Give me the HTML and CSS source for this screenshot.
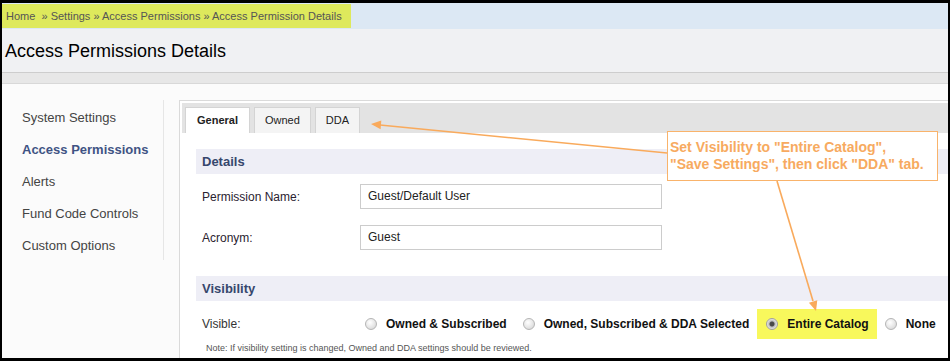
FILE: index.html
```html
<!DOCTYPE html>
<html>
<head>
<meta charset="utf-8">
<link rel="stylesheet" href="styles.css">
</head>
<body>
<div class="frame">
  <div class="crumbbar">
    <span class="crumb">Home &nbsp;» Settings » Access Permissions » Access Permission Details</span>
  </div>
  <div class="titlebar">Access Permissions Details</div>
  <div class="band"></div>
  <div class="main">
    <ul class="sidebar">
      <li>System Settings</li>
      <li class="active">Access Permissions</li>
      <li>Alerts</li>
      <li>Fund Code Controls</li>
      <li>Custom Options</li>
    </ul>
    <div class="panel">
      <div class="tabs">
        <div class="tab active">General</div>
        <div class="tab">Owned</div>
        <div class="tab">DDA</div>
      </div>
      <div class="content">
        <div class="section">Details</div>
        <div class="row first">
          <label class="label">Permission Name:</label>
          <div class="input">Guest/Default User</div>
        </div>
        <div class="row second">
          <label class="label">Acronym:</label>
          <div class="input">Guest</div>
        </div>
        <div class="section vis">Visibility</div>
        <div class="radios">
          <span class="rlabel">Visible:</span>
          <span class="opt"><span class="radio"></span>Owned &amp; Subscribed</span>
          <span class="opt"><span class="radio"></span>Owned, Subscribed &amp; DDA Selected</span>
          <span class="opt hl"><span class="radio on"></span>Entire Catalog</span>
          <span class="opt"><span class="radio"></span>None</span>
        </div>
        <div class="note">Note: If visibility setting is changed, Owned and DDA settings should be reviewed.</div>
      </div>
    </div>
  </div>
</div>
<svg class="arrows" width="950" height="361" viewBox="0 0 950 361">
  <line x1="667" y1="153" x2="380" y2="125" stroke="#f9aa5c" stroke-width="1.6"/>
  <polygon points="371,124 381.3,120.6 380.6,129.2" fill="#f9aa5c"/>
  <line x1="777" y1="181" x2="813" y2="301" stroke="#f9aa5c" stroke-width="1.6"/>
  <polygon points="816,311 817.3,300.2 808.9,302.7" fill="#f9aa5c"/>
</svg>
<div class="callout">Set Visibility to "Entire Catalog",<br>"Save Settings", then click "DDA" tab.</div>
</body>
</html>
```
FILE: styles.css
```css
html, body {
  margin: 0;
  padding: 0;
}
body {
  position: relative;
  width: 950px;
  height: 361px;
  overflow: hidden;
  font-family: "Liberation Sans", Arial, sans-serif;
  background: #fff;
}
.frame {
  width: 950px;
  height: 361px;
  box-sizing: border-box;
  border-style: solid;
  border-color: #000;
  border-width: 3px 2px 3px 2px;
  overflow: hidden;
  background: #fbfbfb;
  display: flex;
  flex-direction: column;
}
.crumbbar {
  height: 26px;
  flex: none;
  background: #dce8f4;
}
.crumb {
  display: inline-block;
  margin-top: 1px;
  height: 24px;
  line-height: 24px;
  padding: 0 9px 0 4px;
  background: #dee95c;
  color: #555;
  font-size: 11px;
}
.titlebar {
  height: 42px;
  flex: none;
  line-height: 42px;
  padding-top: 1px;
  background: #f0f1f3;
  padding-left: 3px;
  font-size: 18px;
  color: #000;
}
.band {
  height: 10px;
  flex: none;
  background: #e7e7e7;
  border-top: 1px solid #cdcdcd;
  border-bottom: 1px solid #d8d8d8;
}
.main {
  flex: 1;
  display: flex;
  align-items: flex-start;
  background: #fbfbfb;
}
.sidebar {
  list-style: none;
  margin: 16px 0 0 0;
  padding: 2px 0 0 20px;
  width: 141px;
  height: 158px;
  flex: none;
  border-right: 1px solid #e6e6e6;
}
.sidebar li {
  height: 32px;
  line-height: 32px;
  font-size: 13px;
  color: #444;
}
.sidebar li.active {
  font-weight: bold;
  color: #3f5384;
}
.panel {
  flex: none;
  width: 800px;
  margin: 16px 0 0 15px;
  border: 1px solid #dadada;
  padding: 2px;
  background: #fff;
}
.tabs {
  display: flex;
  align-items: flex-end;
  gap: 4px;
  height: 30px;
  box-sizing: border-box;
  padding: 4px 0 0 3px;
  background: #e3e3e3;
}
.tab {
  height: 26px;
  box-sizing: border-box;
  line-height: 25px;
  padding: 0 10px;
  border: 1px solid #d4d4d4;
  border-bottom: none;
  background: #f4f4f4;
  font-size: 11px;
  color: #222;
}
.tab.active {
  background: #fff;
  font-weight: bold;
  padding: 0 11px;
}
.content {
  background: #fff;
  padding: 16px 0 10px 14px;
}
.section {
  height: 25px;
  line-height: 25px;
  background: #eeeef6;
  padding-left: 6px;
  font-size: 13px;
  font-weight: bold;
  color: #36476d;
}
.section.vis {
  margin-top: 26px;
}
.row {
  display: flex;
  align-items: center;
  height: 25px;
}
.row.first {
  margin-top: 10px;
}
.row.second {
  margin-top: 16px;
}
.label {
  width: 158px;
  padding-left: 6px;
  font-size: 12px;
  color: #2a2230;
}
.input {
  width: 302px;
  height: 25px;
  box-sizing: border-box;
  border: 1px solid #cccccc;
  line-height: 23px;
  padding-left: 7px;
  font-size: 12px;
  color: #222;
  background: #fff;
}
.radios {
  display: flex;
  align-items: center;
  height: 30px;
  margin-top: 8px;
}
.rlabel {
  width: 155px;
  padding-left: 6px;
  font-size: 12px;
  color: #333;
}
.opt {
  display: flex;
  align-items: center;
  gap: 9px;
  height: 30px;
  padding: 0 8px;
  font-size: 12px;
  font-weight: bold;
  color: #111;
}
.opt.hl {
  background: #f8f85c;
  padding: 0 8px 0 9px;
}
.radio {
  width: 12px;
  height: 12px;
  box-sizing: border-box;
  border-radius: 50%;
  border: 1px solid #b5b5b5;
  background: radial-gradient(circle at 40% 35%, #ffffff 0, #e6e6e6 55%, #cfcfcf 100%);
}
.radio.on {
  border-color: #a0a0a0;
  background: radial-gradient(circle, #4a4a4a 0, #4a4a4a 2px, #bdbdbd 3px, #e8e8e8 5px);
}
.note {
  margin-top: 3px;
  padding-left: 10px;
  font-size: 9px;
  line-height: 12px;
  color: #555;
}
.arrows {
  position: absolute;
  left: 0;
  top: 0;
  pointer-events: none;
}
.callout {
  position: absolute;
  left: 667px;
  top: 131px;
  width: 271px;
  height: 50px;
  box-sizing: border-box;
  border: 1px solid #f9b36b;
  background: #fff;
  padding: 7px 0 0 2px;
  font-size: 14px;
  line-height: 17px;
  font-weight: bold;
  color: #f7aa60;
  white-space: nowrap;
}
```
